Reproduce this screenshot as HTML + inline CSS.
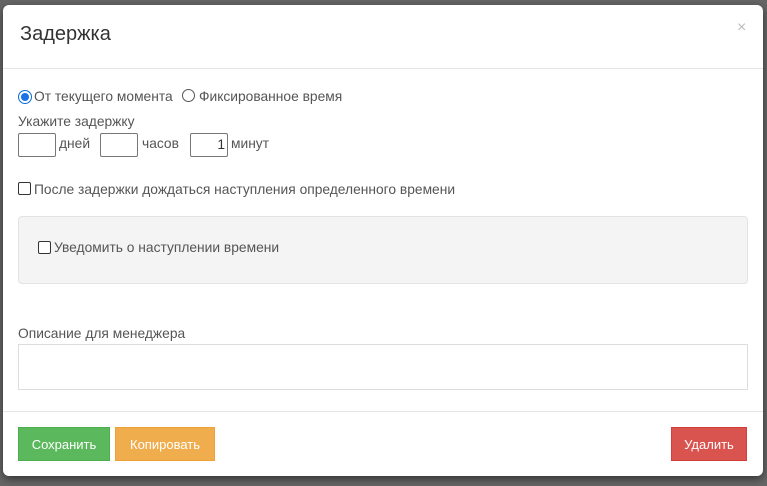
<!DOCTYPE html>
<html><head><meta charset="utf-8"><style>
body{margin:0;width:767px;height:486px;background:#666;overflow:hidden;font-family:"Liberation Sans","DejaVu Sans",sans-serif;color:#555;font-size:13.8px}
.m{position:absolute;left:3px;top:5px;width:760px;height:471px;background:#fff;border-radius:6px;box-shadow:0 3px 9px rgba(0,0,0,.5)}
.a{position:absolute;white-space:nowrap}
.inp{position:absolute;border:1px solid #777;border-radius:2px;width:36px;height:22px;box-sizing:content-box;background:#fff}
.cb{position:absolute;width:11px;height:11px;border:1px solid #333;border-radius:2px;background:#fff}
.btn{position:absolute;top:422px;height:34px;color:#fff;line-height:34px;text-align:center;font-size:13px;box-sizing:border-box;border:1px solid rgba(0,0,0,.1)}
</style></head><body>
<div class="m">
<div class="a" style="left:17px;top:18px;font-size:20px;color:#333">Задержка</div>
<div class="a" style="left:734px;top:14px;font-size:16px;color:#bbb">×</div>
<div style="position:absolute;left:0;right:0;top:63px;border-top:1px solid #e5e5e5"></div>

<div class="a" style="left:15px;top:85px;width:12px;height:12px;border-radius:50%;border:1px solid #0a6bd6;background:#fff"><div style="position:absolute;left:2px;top:2px;width:8px;height:8px;border-radius:50%;background:#1a73e8"></div></div>
<div class="a" style="left:31px;top:84px">От текущего момента</div>
<div class="a" style="left:179px;top:84px;width:11px;height:11px;border-radius:50%;border:1px solid #555"></div>
<div class="a" style="left:196px;top:84px">Фиксированное время</div>

<div class="a" style="left:15px;top:109px">Укажите задержку</div>
<div class="inp" style="left:15px;top:128px"></div>
<div class="a" style="left:56px;top:131px">дней</div>
<div class="inp" style="left:97px;top:128px"></div>
<div class="a" style="left:139px;top:131px">часов</div>
<div class="inp" style="left:187px;top:128px"><span style="position:absolute;right:2px;top:3px;color:#333">1</span></div>
<div class="a" style="left:228px;top:131px">минут</div>

<div class="cb" style="left:15px;top:177px"></div>
<div class="a" style="left:31px;top:177px">После задержки дождаться наступления определенного времени</div>

<div style="position:absolute;left:15px;top:211px;width:728px;height:66px;background:#f4f4f4;border:1px solid #e3e3e3;border-radius:4px"></div>
<div class="cb" style="left:35px;top:236px"></div>
<div class="a" style="left:51px;top:235px">Уведомить о наступлении времени</div>

<div class="a" style="left:15px;top:321px">Описание для менеджера</div>
<div style="position:absolute;left:15px;top:339px;width:728px;height:44px;border:1px solid #ddd"></div>

<div style="position:absolute;left:0;right:0;top:406px;border-top:1px solid #e5e5e5"></div>
<div class="btn" style="left:15px;width:92px;background:#5cb85c;border-color:#4cae4c">Сохранить</div>
<div class="btn" style="left:112px;width:100px;background:#f0ad4e;border-color:#eea236">Копировать</div>
<div class="btn" style="left:668px;width:76px;background:#d9534f;border-color:#d43f3a">Удалить</div>
</div>
</body></html>
